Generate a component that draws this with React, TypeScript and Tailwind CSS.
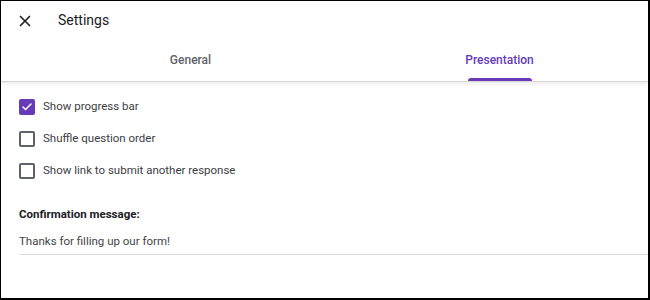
import { X, Check } from "lucide-react";

function CheckRow({ label, checked }: { label: string; checked?: boolean }) {
  return (
    <div className="flex h-[32px] items-center">
      {checked ? (
        <span className="ml-[18px] flex h-[16px] w-[16px] items-center justify-center rounded-[2px] bg-[#673ab7]">
          <Check className="h-[12px] w-[12px] text-white" strokeWidth={3} />
        </span>
      ) : (
        <span className="ml-[18px] h-[16px] w-[16px] rounded-[2px] border-2 border-[#5f6368]" />
      )}
      <span className="ml-[8px] text-[11.5px] text-[#3c4043]">{label}</span>
    </div>
  );
}

export default function App() {
  return (
    <div
      className="h-[300px] w-[650px] overflow-hidden border-t border-l border-r-2 border-b-2 border-black bg-white"
      style={{ fontFamily: "Roboto, 'Liberation Sans', sans-serif" }}
    >
      <div className="relative border-b border-[#d6d6d6] shadow-[0_2px_4px_rgba(0,0,0,0.08)]">
        <div className="flex h-[39px] items-center">
          <X className="ml-[15px] h-[18px] w-[18px] text-[#202124]" strokeWidth={2.2} />
          <span className="ml-[24px] text-[14px] text-[#202124]">Settings</span>
        </div>
        <div className="ml-[35px] flex h-[41px] w-[618px]">
          <div className="flex flex-1 items-center justify-center pb-[1px] text-[12px] font-medium text-[#5f6368]">
            General
          </div>
          <div className="relative flex flex-1 items-center justify-center pb-[1px] text-[12px] font-medium text-[#673ab7]">
            Presentation
            <span className="absolute bottom-0 left-1/2 h-[3px] w-[64px] -translate-x-1/2 rounded-t-[3px] bg-[#673ab7]" />
          </div>
        </div>
      </div>

      <div className="pt-[9px]">
        <CheckRow label="Show progress bar" checked />
        <CheckRow label="Shuffle question order" />
        <CheckRow label="Show link to submit another response" />
      </div>

      <div className="mt-[19px] pl-[18px]">
        <div className="text-[11.5px] font-bold text-[#202124]">Confirmation message:</div>
        <div className="mt-[10px] border-b border-[#dadce0] pb-[3px] text-[11.5px] text-[#444]">
          Thanks for filling up our form!
        </div>
      </div>
    </div>
  );
}
